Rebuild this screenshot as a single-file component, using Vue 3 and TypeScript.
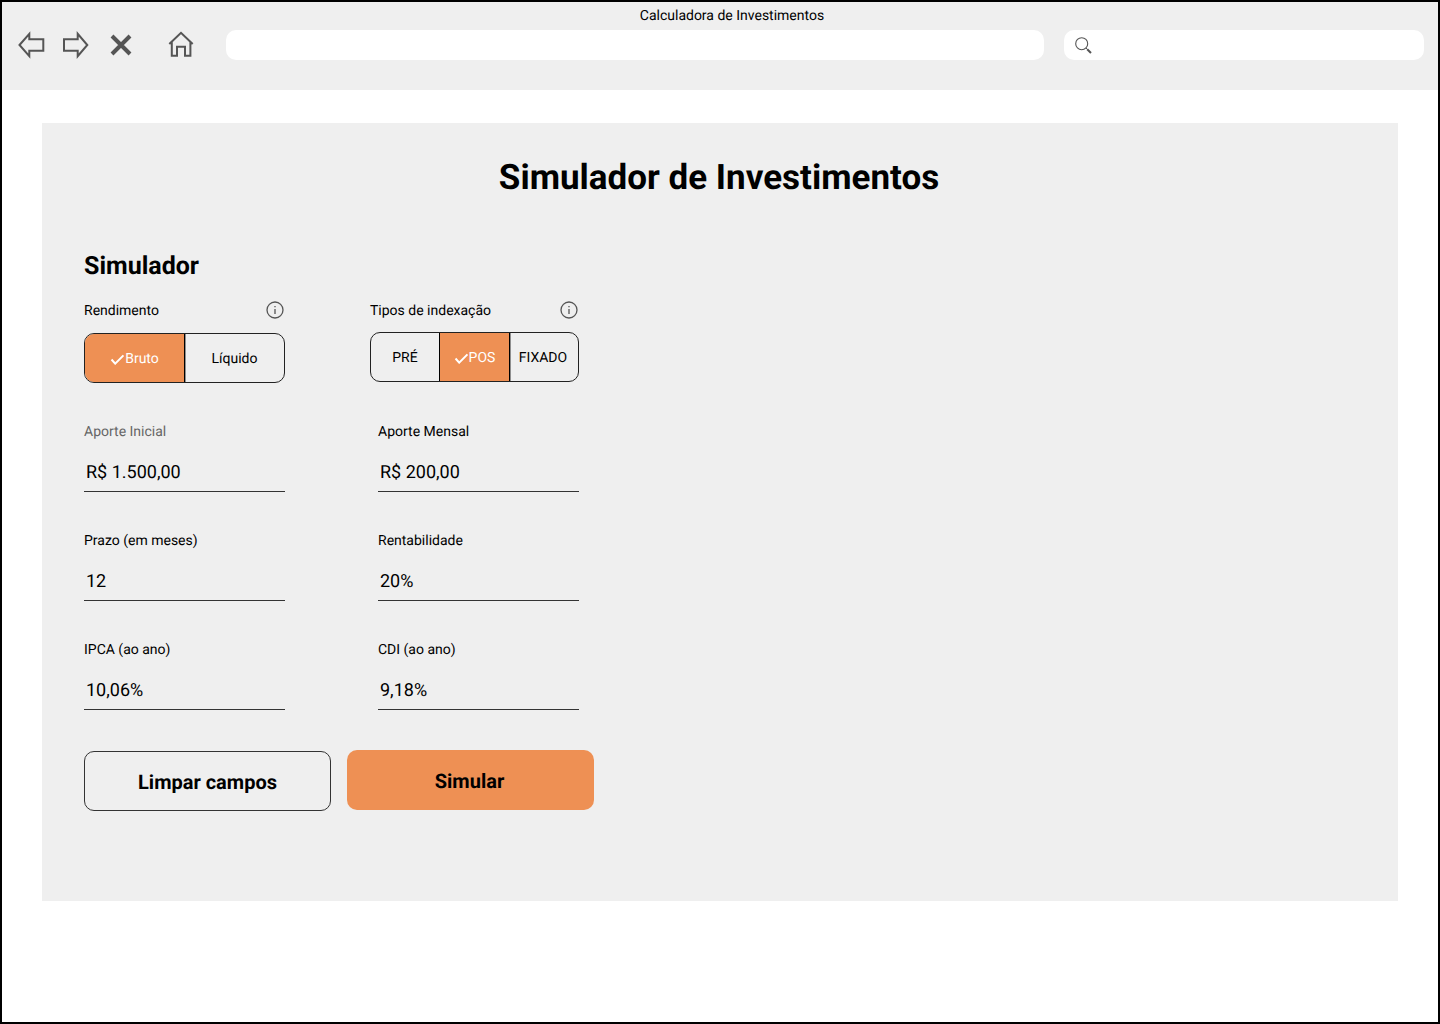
<script setup lang="ts">
interface Field { label: string; value: string; muted?: boolean }
const fields: Field[] = [
  { label: 'Aporte Inicial', value: 'R$ 1.500,00', muted: true },
  { label: 'Aporte Mensal', value: 'R$ 200,00' },
  { label: 'Prazo (em meses)', value: '12' },
  { label: 'Rentabilidade', value: '20%' },
  { label: 'IPCA (ao ano)', value: '10,06%' },
  { label: 'CDI (ao ano)', value: '9,18%' },
]
</script>

<template>
  <div class="frame">
    <header class="browser">
      <div class="window-title">Calculadora de Investimentos</div>
      <div class="toolbar">
        <svg class="tool back" viewBox="0 0 28 28"><path d="M1.5 14 11.3 2.8V8.3H25.3V19.7H11.3V25.2Z" /></svg>
        <svg class="tool forward" viewBox="0 0 28 28"><path d="M2 8.3H15.7V2.8L25.3 14 15.7 25.2V19.7H2Z" /></svg>
        <svg class="tool close" viewBox="0 0 28 28"><path d="M5 5 23 23M23 5 5 23" /></svg>
        <svg class="tool home" viewBox="0 0 28 28"><path d="M2.3 13 14 1.8 25.7 13M4.8 10.8V24.7H10V15.8H18V24.7H23.4V10.8" /></svg>
        <div class="address"></div>
        <div class="search">
          <svg class="search-icon" viewBox="0 0 18 18"><circle cx="7.7" cy="7.7" r="6" /><path class="thin" d="M12 12 13.5 13.5" /><path d="M13.2 13.2 17 17" /></svg>
        </div>
      </div>
    </header>

    <main class="panel">
      <h1>Simulador de Investimentos</h1>
      <section class="form">
        <h2>Simulador</h2>
        <div class="choices">
          <div class="choice first">
            <div class="choice-head">
              <span>Rendimento</span>
              <svg class="info" viewBox="0 0 18 18"><circle cx="9" cy="9" r="8" /><path d="M9 8V13M9 5V6.2" /></svg>
            </div>
            <div class="segments wide">
              <div class="seg selected divider">
                <svg class="check" viewBox="0 0 16 12"><path d="M1.5 6 5.5 10.5 14.5 1.5" /></svg>Bruto
              </div>
              <div class="seg">Líquido</div>
            </div>
          </div>
          <div class="choice second">
            <div class="choice-head">
              <span>Tipos de indexação</span>
              <svg class="info" viewBox="0 0 18 18"><circle cx="9" cy="9" r="8" /><path d="M9 8V13M9 5V6.2" /></svg>
            </div>
            <div class="segments triple">
              <div class="seg divider">PRÉ</div>
              <div class="seg selected divider">
                <svg class="check" viewBox="0 0 16 12"><path d="M1.5 6 5.5 10.5 14.5 1.5" /></svg>POS
              </div>
              <div class="seg last">FIXADO</div>
            </div>
          </div>
        </div>

        <div class="fields">
          <div v-for="f in fields" :key="f.label" class="field">
            <div class="field-label" :class="{ muted: f.muted }">{{ f.label }}</div>
            <div class="field-value">{{ f.value }}</div>
          </div>
        </div>

        <div class="actions">
          <button type="button" class="btn clear">Limpar campos</button>
          <button type="button" class="btn submit">Simular</button>
        </div>
      </section>
    </main>
  </div>
</template>

<style>
html, body { margin: 0; background: #fff; }
</style>

<style scoped>
.frame {
  box-sizing: border-box;
  width: 1440px;
  height: 1024px;
  border: 2px solid #000;
  background: #fff;
  font-family: Roboto, "Liberation Sans", sans-serif;
  color: #000;
  overflow: hidden;
  text-rendering: geometricPrecision;
}
.browser { height: 88px; background: #efefef; }
.window-title {
  height: 26px;
  padding: 5px 0 0 24px;
  box-sizing: border-box;
  text-align: center;
  font-size: 14px;
  line-height: 19px;
}
.toolbar { display: flex; align-items: center; padding: 2px 0 0 16px; box-sizing: border-box; height: 32px; }
.tool { width: 28px; height: 28px; flex: none; fill: none; stroke: #555; stroke-width: 2; }
.forward { margin-left: 16px; }
.close { margin-left: 17px; stroke-width: 4; }
.home { margin-left: 32px; }
.address { width: 818px; height: 30px; margin-left: 31px; background: #fff; border-radius: 10px; }
.search {
  display: flex;
  align-items: center;
  box-sizing: border-box;
  width: 360px;
  height: 30px;
  margin-left: 20px;
  padding-left: 10px;
  background: #fff;
  border-radius: 10px;
}
.search-icon { width: 18px; height: 18px; fill: none; stroke: #555; stroke-width: 1.1; }
.search-icon path { stroke-width: 2; }
.search-icon .thin { stroke-width: 1; }
.panel {
  box-sizing: border-box;
  width: 1356px;
  height: 778px;
  margin: 33px 0 0 40px;
  padding-top: 30px;
  background: #efefef;
}
h1 {
  margin: 0 2px 0 0;
  font-size: 35px;
  line-height: 49px;
  font-weight: 700;
  text-align: center;
}
.form { padding-left: 42px; }
h2 {
  margin: 49px 0 0;
  font-size: 25px;
  line-height: 32px;
  font-weight: 700;
}
.choices { display: flex; margin-top: 17px; }
.choice { font-size: 14px; }
.first { width: 201px; }
.second { width: 209px; margin-left: 85px; }
.choice-head {
  display: flex;
  align-items: center;
  justify-content: space-between;
  height: 20px;
  line-height: 20px;
  padding-right: 1px;
}
.choice-head span { padding-top: 1px; }
.info { width: 18px; height: 18px; fill: none; stroke: #555; stroke-width: 1.3; }
.segments {
  display: grid;
  box-sizing: border-box;
  height: 50px;
  margin-top: 12px;
  border: 1px solid #222;
  border-radius: 10px;
  overflow: hidden;
}
.wide { margin-top: 13px; grid-template-columns: 100px 1fr; }
.triple { grid-template-columns: 69px 70px 1fr; }
.seg {
  display: flex;
  align-items: center;
  justify-content: center;
  box-sizing: border-box;
  padding-top: 2px;
  font-size: 14px;
}
.last { padding-right: 2px; }
.divider { border-right: 1px solid #000; box-shadow: 1px 0 0 rgba(0, 0, 0, 0.4); }
.selected { background: #ee9054; color: #fff; }
.check {
  width: 15px;
  height: 11px;
  fill: none;
  stroke: #fff;
  stroke-width: 2.2;
  flex: none;
}
.fields {
  display: grid;
  grid-template-columns: 201px 201px;
  column-gap: 93px;
  row-gap: 38px;
  margin-top: 38px;
}
.field-label { height: 20px; font-size: 14px; line-height: 22px; }
.muted { color: #666; }
.field-value {
  box-sizing: border-box;
  height: 51px;
  padding: 21px 0 0 2px;
  border-bottom: 1px solid #333;
  font-size: 18px;
  line-height: 22px;
}
.actions { display: flex; align-items: flex-start; gap: 16px; margin-top: 40px; }
.btn {
  box-sizing: border-box;
  width: 247px;
  height: 60px;
  padding: 2px 0 0;
  border-radius: 10px;
  font-family: inherit;
  font-size: 20px;
  font-weight: 700;
  color: #000;
  text-rendering: geometricPrecision;
}
.clear { margin-top: 1px; background: #efefef; border: 1px solid #333; }
.submit { background: #ee9054; border: none; padding-right: 2px; }
</style>
